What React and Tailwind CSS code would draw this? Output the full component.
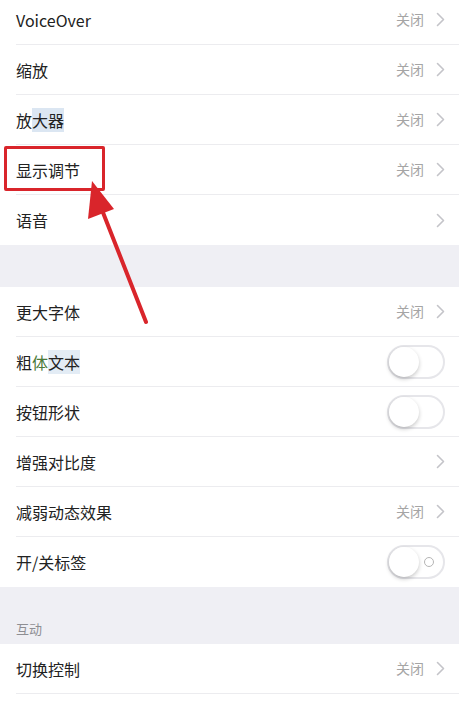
import React from 'react';

const font = { fontFamily: '"Noto Sans CJK SC", "Noto Sans", sans-serif' };

const Chevron = () => (
  <svg width="9" height="15" viewBox="0 0 9 15" fill="none" className="ml-3">
    <path d="M1.5 1.5l6 6-6 6" stroke="#c4c4c9" strokeWidth="1.6" strokeLinecap="round" strokeLinejoin="round" />
  </svg>
);

const Toggle = ({ label }) => (
  <div className="relative w-[58px] h-[34px] rounded-full border-2 border-[#e6e6ea] bg-white">
    <div className="absolute left-0 top-0 w-[30px] h-[30px] rounded-full bg-white shadow-[0_2px_4px_rgba(0,0,0,0.22)]" />
    {label && (
      <div className="absolute right-[9px] top-[10px] w-[10px] h-[10px] rounded-full border-[1.5px] border-[#b5b5b5]" />
    )}
  </div>
);

const Row = ({ title, value, toggle, toggleLabel, last, children }) => (
  <div className="bg-white pl-4">
    <div className={`flex h-[50px] items-center pr-[14px] ${last ? '' : 'border-b border-[#ececef]'}`}>
      <div className="flex-1 text-[16px] text-[#222]">{children || title}</div>
      {toggle ? (
        <Toggle label={toggleLabel} />
      ) : (
        <div className="flex items-center">
          {value && <span className="text-[14px] text-[#a5a5a5]">{value}</span>}
          <Chevron />
        </div>
      )}
    </div>
  </div>
);

export default function App() {
  return (
    <div className="relative h-[702px] w-[459px] overflow-hidden bg-white" style={font}>
      <div className="-mt-[5px]">
        <Row title="VoiceOver" value="关闭" />
        <Row title="缩放" value="关闭" />
        <Row value="关闭">
          <span>放<span className="bg-[#dbe6f2]">大器</span></span>
        </Row>
        <Row title="显示调节" value="关闭" />
        <Row title="语音" last />

        <div className="h-[42px] bg-[#efeff4]" />

        <Row title="更大字体" value="关闭" />
        <Row toggle>
          <span>粗<span className="text-[#4a7a3a]">体</span><span className="bg-[#e3ecf5]">文本</span></span>
        </Row>
        <Row title="按钮形状" toggle />
        <Row title="增强对比度" />
        <Row title="减弱动态效果" value="关闭" />
        <Row title="开/关标签" toggle toggleLabel last />

        <div className="flex h-[57px] items-end bg-[#efeff4] pb-[6px] pl-4">
          <span className="text-[13px] text-[#8e8e93]">互动</span>
        </div>

        <Row title="切换控制" value="关闭" />
      </div>

      {/* red annotation box */}
      <div className="absolute left-[4px] top-[146px] h-[45px] w-[101px] rounded-[2px] border-[3px] border-[#d9252b]" />

      {/* red arrow */}
      <svg className="absolute left-0 top-0" width="459" height="702" viewBox="0 0 459 702">
        <line x1="146" y1="322" x2="102" y2="210" stroke="#d9252b" strokeWidth="4" strokeLinecap="round" />
        <polygon points="92,181 88,219 114,209" fill="#d9252b" />
      </svg>
    </div>
  );
}
